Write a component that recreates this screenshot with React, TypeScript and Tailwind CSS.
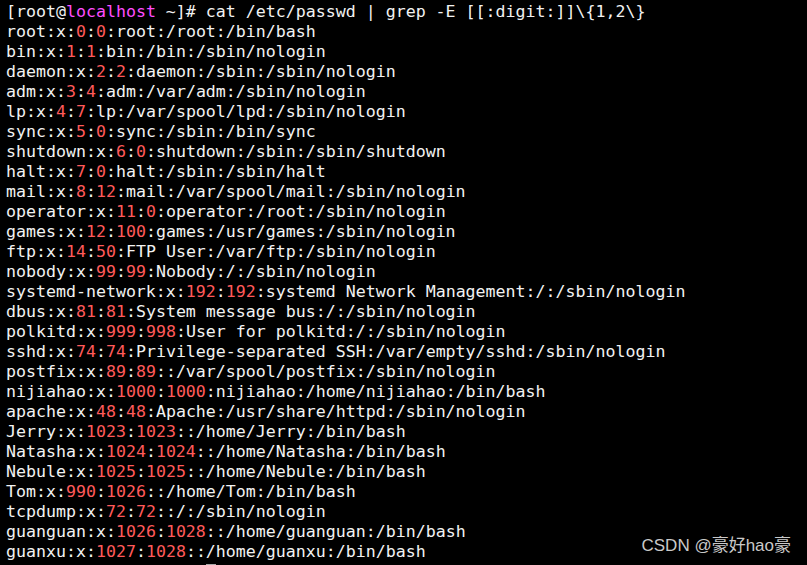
const rows: [string, string, string, string][] = [
  ["root", "0", "0", "root:/root:/bin/bash"],
  ["bin", "1", "1", "bin:/bin:/sbin/nologin"],
  ["daemon", "2", "2", "daemon:/sbin:/sbin/nologin"],
  ["adm", "3", "4", "adm:/var/adm:/sbin/nologin"],
  ["lp", "4", "7", "lp:/var/spool/lpd:/sbin/nologin"],
  ["sync", "5", "0", "sync:/sbin:/bin/sync"],
  ["shutdown", "6", "0", "shutdown:/sbin:/sbin/shutdown"],
  ["halt", "7", "0", "halt:/sbin:/sbin/halt"],
  ["mail", "8", "12", "mail:/var/spool/mail:/sbin/nologin"],
  ["operator", "11", "0", "operator:/root:/sbin/nologin"],
  ["games", "12", "100", "games:/usr/games:/sbin/nologin"],
  ["ftp", "14", "50", "FTP User:/var/ftp:/sbin/nologin"],
  ["nobody", "99", "99", "Nobody:/:/sbin/nologin"],
  ["systemd-network", "192", "192", "systemd Network Management:/:/sbin/nologin"],
  ["dbus", "81", "81", "System message bus:/:/sbin/nologin"],
  ["polkitd", "999", "998", "User for polkitd:/:/sbin/nologin"],
  ["sshd", "74", "74", "Privilege-separated SSH:/var/empty/sshd:/sbin/nologin"],
  ["postfix", "89", "89", ":/var/spool/postfix:/sbin/nologin"],
  ["nijiahao", "1000", "1000", "nijiahao:/home/nijiahao:/bin/bash"],
  ["apache", "48", "48", "Apache:/usr/share/httpd:/sbin/nologin"],
  ["Jerry", "1023", "1023", ":/home/Jerry:/bin/bash"],
  ["Natasha", "1024", "1024", ":/home/Natasha:/bin/bash"],
  ["Nebule", "1025", "1025", ":/home/Nebule:/bin/bash"],
  ["Tom", "990", "1026", ":/home/Tom:/bin/bash"],
  ["tcpdump", "72", "72", ":/:/sbin/nologin"],
  ["guanguan", "1026", "1028", ":/home/guanguan:/bin/bash"],
  ["guanxu", "1027", "1028", ":/home/guanxu:/bin/bash"],
];

function Prompt() {
  return (
    <>
      [root@<span className="text-[#ff4dff]">localhost</span> ~]#{" "}
    </>
  );
}

export default function App() {
  return (
    <div className="relative w-[807px] h-[565px] overflow-hidden bg-black">
      <div
        className="pl-[6px] pt-[2px] text-[16.6px] leading-[20px] text-[#f2f2f2] whitespace-pre"
        style={{ fontFamily: '"DejaVu Sans Mono", monospace' }}
      >
        <div>
          <Prompt />
          cat /etc/passwd | grep -E [[:digit:]]\{"{"}1,2\{"}"}
        </div>
        {rows.map(([name, uid, gid, rest]) => (
          <div key={name}>
            {name}:x:<span className="text-[#ff5a5a]">{uid}</span>:
            <span className="text-[#ff5a5a]">{gid}</span>:{rest}
          </div>
        ))}
        <div className="flex">
          <Prompt />
          <span className="mt-[2px] w-[10px] h-[18px] bg-[#a8a8a8]" />
        </div>
      </div>
      <div
        className="absolute right-[16px] bottom-[7px] text-[17px] text-[#c9c9c9]"
        style={{ fontFamily: '"Liberation Sans", "Noto Sans CJK SC", sans-serif' }}
      >
        CSDN @豪好hao豪
      </div>
    </div>
  );
}
